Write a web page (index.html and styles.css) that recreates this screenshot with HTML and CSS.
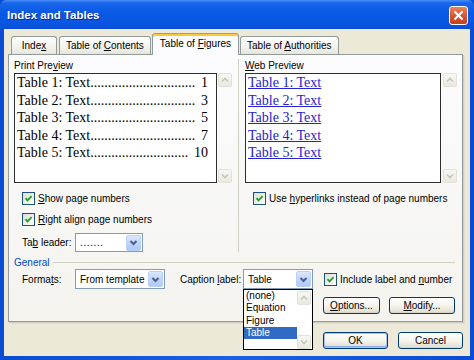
FILE: index.html
```html
<!DOCTYPE html>
<html>
<head>
<meta charset="UTF-8">
<title>Index and Tables</title>
<link rel="stylesheet" href="styles.css">
</head>
<body>
<div class="window">
	<!-- 제목 표시줄 -->
	<div class="titlebar">
		<span class="title">Index and Tables</span>
		<span class="close"><svg width="11" height="11" viewBox="0 0 11 11"><path d="M1.5 1.5 L9.5 9.5 M9.5 1.5 L1.5 9.5" stroke="#fff" stroke-width="2"/></svg></span>
	</div>

	<div class="client">
		<!-- 탭 -->
		<div class="tabs">
			<div class="tab">Inde<u>x</u></div>
			<div class="tab">Table of <u>C</u>ontents</div>
			<div class="tab tab-on">Table of <u>F</u>igures</div>
			<div class="tab">Table of <u>A</u>uthorities</div>
		</div>

		<div class="panel">
			<div class="previews">
				<div class="col">
					<div class="label">Print Pre<u>v</u>iew</div>
					<div class="preview-wrap">
						<div class="preview print">
							<div class="entry"><span>Table 1: Text</span><span class="leader">..............................</span><span class="num">1</span></div>
							<div class="entry"><span>Table 2: Text</span><span class="leader">..............................</span><span class="num">3</span></div>
							<div class="entry"><span>Table 3: Text</span><span class="leader">..............................</span><span class="num">5</span></div>
							<div class="entry"><span>Table 4: Text</span><span class="leader">..............................</span><span class="num">7</span></div>
							<div class="entry"><span>Table 5: Text</span><span class="leader">............................</span><span class="num">10</span></div>
						</div>
						<div class="vscroll">
							<span class="sb-btn"><svg width="12" height="12" viewBox="0 0 12 12"><polyline points="3,7.5 6,4.5 9,7.5" fill="none" stroke="#c6c5bc" stroke-width="1.6"/></svg></span>
							<span class="sb-btn"><svg width="12" height="12" viewBox="0 0 12 12"><polyline points="3,4.5 6,7.5 9,4.5" fill="none" stroke="#c6c5bc" stroke-width="1.6"/></svg></span>
						</div>
					</div>
					<div class="check check-first"><span class="cb"><svg width="11" height="11" viewBox="0 0 11 11"><polyline points="2.5,5.2 4.5,7.4 8.6,3.2" fill="none" stroke="#21a121" stroke-width="1.8"/></svg></span><span><u>S</u>how page numbers</span></div>
					<div class="check"><span class="cb"><svg width="11" height="11" viewBox="0 0 11 11"><polyline points="2.5,5.2 4.5,7.4 8.6,3.2" fill="none" stroke="#21a121" stroke-width="1.8"/></svg></span><span><u>R</u>ight align page numbers</span></div>
					<div class="field-row leader-row">
						<span class="field-label">Ta<u>b</u> leader:</span>
						<div class="combo combo-leader">
							<span class="combo-text dots">.......</span>
							<span class="drop"><svg width="13" height="15" viewBox="0 0 13 15"><polyline points="3.5,6 6.5,9 9.5,6" fill="none" stroke="#4d6185" stroke-width="2"/></svg></span>
						</div>
					</div>
				</div>

				<div class="col col-web">
					<div class="label"><u>W</u>eb Preview</div>
					<div class="preview-wrap">
						<div class="preview web">
							<span class="link">Table 1: Text</span>
							<span class="link">Table 2: Text</span>
							<span class="link">Table 3: Text</span>
							<span class="link">Table 4: Text</span>
							<span class="link">Table 5: Text</span>
						</div>
						<div class="vscroll">
							<span class="sb-btn"><svg width="12" height="12" viewBox="0 0 12 12"><polyline points="3,7.5 6,4.5 9,7.5" fill="none" stroke="#c6c5bc" stroke-width="1.6"/></svg></span>
							<span class="sb-btn"><svg width="12" height="12" viewBox="0 0 12 12"><polyline points="3,4.5 6,7.5 9,4.5" fill="none" stroke="#c6c5bc" stroke-width="1.6"/></svg></span>
						</div>
					</div>
					<div class="check check-first"><span class="cb"><svg width="11" height="11" viewBox="0 0 11 11"><polyline points="2.5,5.2 4.5,7.4 8.6,3.2" fill="none" stroke="#21a121" stroke-width="1.8"/></svg></span><span>Use <u>h</u>yperlinks instead of page numbers</span></div>
				</div>
			</div>

			<!-- 일반 -->
			<div class="group-title">General</div>
			<div class="field-row formats-row">
				<span class="field-label">Forma<u>t</u>s:</span>
				<div class="combo combo-formats">
					<span class="combo-text">From template</span>
					<span class="drop"><svg width="13" height="15" viewBox="0 0 13 15"><polyline points="3.5,6 6.5,9 9.5,6" fill="none" stroke="#4d6185" stroke-width="2"/></svg></span>
				</div>
				<span class="field-label caption-label">Caption <u>l</u>abel:</span>
				<div class="combo combo-caption">
					<span class="combo-text">Table</span>
					<span class="drop"><svg width="13" height="15" viewBox="0 0 13 15"><polyline points="3.5,6 6.5,9 9.5,6" fill="none" stroke="#4d6185" stroke-width="2"/></svg></span>
					<div class="droplist">
						<div class="items">
							<div class="item">(none)</div>
							<div class="item">Equation</div>
							<div class="item">Figure</div>
							<div class="item item-on">Table</div>
						</div>
						<div class="vscroll list-scroll">
							<span class="sb-btn"><svg width="12" height="12" viewBox="0 0 12 12"><polyline points="3,7.5 6,4.5 9,7.5" fill="none" stroke="#c6c5bc" stroke-width="1.6"/></svg></span>
							<span class="sb-btn"><svg width="12" height="12" viewBox="0 0 12 12"><polyline points="3,4.5 6,7.5 9,4.5" fill="none" stroke="#c6c5bc" stroke-width="1.6"/></svg></span>
						</div>
					</div>
				</div>
				<div class="check check-include"><span class="cb"><svg width="11" height="11" viewBox="0 0 11 11"><polyline points="2.5,5.2 4.5,7.4 8.6,3.2" fill="none" stroke="#21a121" stroke-width="1.8"/></svg></span><span>Include label and <u>n</u>umber</span></div>
			</div>
			<div class="panel-buttons">
				<button type="button" class="btn btn-options"><u>O</u>ptions...</button>
				<button type="button" class="btn btn-modify"><u>M</u>odify...</button>
			</div>
		</div>

		<div class="dlg-buttons">
			<button type="button" class="btn btn-ok">OK</button>
			<button type="button" class="btn btn-cancel">Cancel</button>
		</div>
	</div>
</div>
</body>
</html>
```

FILE: styles.css
```css
html
{
	background: #0b4fd8;
}
body
{
	margin: 0;
	font-family: "Liberation Sans", Arial, sans-serif;
	font-size: 10px;
	color: #000;
}
u
{
	text-decoration: underline;
}

/* 창 */
.window
{
	width: 474px;
	height: 360px;
	display: flex;
	flex-direction: column;
	background: linear-gradient(to right, #0a4bd4, #1a5fe4 50%, #0a4bd4);
}
.titlebar
{
	height: 29px;
	flex: none;
	display: flex;
	align-items: center;
	justify-content: space-between;
	padding: 0 6px 0 7px;
	background: linear-gradient(to bottom, #4a8cf6 0, #1766ea 3px, #0a5ae6 12px, #0856e2 22px, #0a4ed6 29px);
	border-radius: 6px 6px 0 0;
}
.title
{
	color: #fff;
	font-weight: bold;
	font-size: 11.5px;
	text-shadow: 1px 1px 0 #0a2a8a;
	margin-top: 1px;
}
.close
{
	width: 19px;
	height: 19px;
	box-sizing: border-box;
	border: 1px solid #fff;
	border-radius: 3px;
	background: linear-gradient(to bottom, #e9835d, #d2502a 60%, #c4431f);
	display: flex;
	align-items: center;
	justify-content: center;
	margin-top: 1px;
}
.client
{
	flex: 1;
	margin: 0 4px 4px 4px;
	background: #ece9d8;
	padding: 4px 7px 0 4px;
}

/* 탭 */
.tabs
{
	display: flex;
	align-items: flex-end;
	height: 21px;
	padding-left: 3px;
	position: relative;
	z-index: 1;
}
.tab
{
	height: 18px;
	box-sizing: border-box;
	min-width: 46px;
	padding: 0 6px;
	margin-right: 2px;
	border: 1px solid #919b9c;
	border-bottom: none;
	border-radius: 3px 3px 0 0;
	background: linear-gradient(to bottom, #ffffff, #f3f2ee 60%, #e6e4da);
	line-height: 17px;
	text-align: center;
	white-space: nowrap;
}
.tab-on
{
	height: 22px;
	margin: 0 1px -1px -1px;
	padding: 0 7px;
	background: #fcfcfe;
	border-top: 1px solid #e68b2c;
	box-shadow: inset 0 2px 0 #ffc83c;
	line-height: 20px;
}

/* 탭 패널 */
.panel
{
	width: 455px;
	height: 268px;
	box-sizing: border-box;
	border: 1px solid #919b9c;
	background: linear-gradient(to bottom, #fcfcfe, #f4f3ee);
	box-shadow: 1px 1px 0 #d2cfc2, 2px 2px 0 #e2dfd1;
	padding: 4px 5px 0 5px;
}
.previews
{
	display: grid;
	grid-template-columns: 224px 1fr;
}
.col-web
{
	border-left: 1px solid #d0cfc4;
	padding-left: 6px;
}
.label
{
	height: 14px;
	line-height: 13px;
}
.preview-wrap
{
	display: flex;
	height: 110px;
}
.preview
{
	box-sizing: border-box;
	height: 110px;
	border: 1px solid #2e2e2e;
	background: #fff;
	font-family: "Liberation Serif", "Times New Roman", serif;
	font-size: 14px;
	line-height: 17.5px;
}
.print
{
	width: 203px;
	margin-right: 1px;
	padding: 0 8px 0 2px;
}
.web
{
	width: 196px;
	margin-right: 2px;
	padding: 0 0 0 2px;
}
.entry
{
	display: flex;
	white-space: nowrap;
}
.leader
{
	flex: 1;
}
.num
{
	padding-left: 1px;
}
.link
{
	display: block;
	color: #2323d2;
	text-decoration: underline;
}

/* 스크롤바 (비활성) */
.vscroll
{
	width: 14px;
	display: flex;
	flex-direction: column;
	justify-content: space-between;
}
.sb-btn
{
	width: 14px;
	height: 14px;
	box-sizing: border-box;
	border: 1px solid #e2e1d8;
	border-radius: 2px;
	background: linear-gradient(to bottom, #f8f8f4, #e9e8e0);
	display: flex;
	align-items: center;
	justify-content: center;
}

/* 체크박스 */
.check
{
	display: flex;
	align-items: center;
	gap: 3px;
	height: 13px;
	margin-top: 8px;
	padding-left: 8px;
	white-space: nowrap;
}
.check-first
{
	margin-top: 9px;
}
.cb
{
	width: 13px;
	height: 13px;
	box-sizing: border-box;
	border: 1px solid #1c5180;
	background: linear-gradient(135deg, #dcdcd7, #ffffff);
	display: flex;
	align-items: center;
	justify-content: center;
}

/* 콤보 박스 */
.field-row
{
	display: flex;
	align-items: center;
	padding-left: 8px;
}
.leader-row
{
	margin-top: 7px;
}
.field-label
{
	width: 53px;
	white-space: nowrap;
}
.combo
{
	position: relative;
	height: 20px;
	box-sizing: border-box;
	border: 1px solid #7f9db9;
	background: #fff;
	display: flex;
	align-items: center;
	justify-content: space-between;
	padding: 1px;
}
.combo-text
{
	padding-left: 3px;
	white-space: nowrap;
}
.dots
{
	letter-spacing: 0.6px;
}
.drop
{
	width: 15px;
	height: 16px;
	box-sizing: border-box;
	border: 1px solid #bad0fa;
	border-radius: 2px;
	background: linear-gradient(to bottom, #dce8fe, #c0d4fc 50%, #b1c9f8);
	display: flex;
	align-items: center;
	justify-content: center;
}
.combo-leader
{
	width: 68px;
	height: 19px;
}
.combo-formats
{
	width: 90px;
}
.caption-label
{
	width: 63px;
	margin-left: 15px;
}
.combo-caption
{
	width: 70px;
}
.check-include
{
	margin: 0 0 0 11px;
	padding: 0;
}

/* 펼친 목록 */
.droplist
{
	position: absolute;
	left: -1px;
	top: 19px;
	width: 70px;
	height: 61px;
	box-sizing: border-box;
	border: 1px solid #000;
	background: #fff;
	display: flex;
	z-index: 2;
}
.items
{
	flex: 1;
}
.item
{
	height: 12.3px;
	line-height: 12.3px;
	padding-left: 2px;
}
.item-on
{
	background: #316ac5;
	color: #fff;
}
.list-scroll
{
	padding: 1px 1px 0 0;
}

/* 일반 */
.group-title
{
	display: flex;
	align-items: center;
	gap: 3px;
	height: 12px;
	margin: 4px 2px 1px 0;
	color: #0046d5;
}
.group-title::after
{
	content: "";
	flex: 1;
	border-top: 1px solid #d0d0bf;
}

/* 버튼 */
.btn
{
	height: 17px;
	box-sizing: border-box;
	padding: 0;
	font-family: "Liberation Sans", Arial, sans-serif;
	font-size: 10px;
	color: #000;
	border: 1px solid #003c74;
	border-radius: 3px;
	background: linear-gradient(to bottom, #ffffff, #f5f4ee 50%, #e3e0d4 90%, #d6d0c5);
	cursor: pointer;
}
.panel-buttons
{
	display: flex;
	justify-content: flex-end;
	gap: 9px;
	margin-top: 8px;
	padding-right: 2px;
}
.btn-options
{
	width: 57px;
}
.btn-modify
{
	width: 66px;
}
.dlg-buttons
{
	display: flex;
	justify-content: flex-end;
	gap: 10px;
	margin-top: 10px;
}
.btn-ok, .btn-cancel
{
	width: 65px;
}
.btn-ok
{
	box-shadow: inset 0 0 0 1px #a9c2f2, inset 0 -1px 0 1px #8cacec;
}
```
